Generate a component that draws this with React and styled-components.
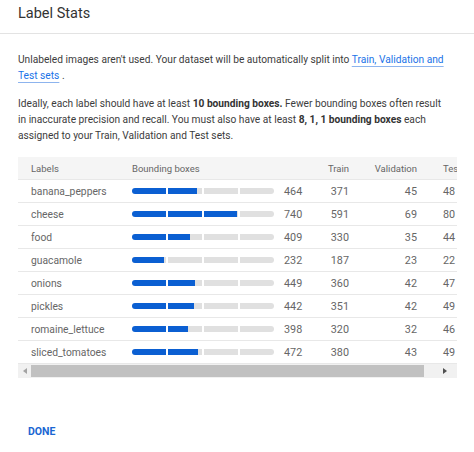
import React from "react";
import styled, { createGlobalStyle } from "styled-components";

const rows = [
  { label: "banana_peppers", total: 464, train: 371, validation: 45, test: 48 },
  { label: "cheese", total: 740, train: 591, validation: 69, test: 80 },
  { label: "food", total: 409, train: 330, validation: 35, test: 44 },
  { label: "guacamole", total: 232, train: 187, validation: 23, test: 22 },
  { label: "onions", total: 449, train: 360, validation: 42, test: 47 },
  { label: "pickles", total: 442, train: 351, validation: 42, test: 49 },
  { label: "romaine_lettuce", total: 398, train: 320, validation: 32, test: 46 },
  { label: "sliced_tomatoes", total: 472, train: 380, validation: 43, test: 49 },
];

const MAX = 1000;
const SEGMENTS = 4;

function Bar({ value }) {
  const per = MAX / SEGMENTS;
  return (
    <BarTrack>
      {Array.from({ length: SEGMENTS }).map((_, i) => {
        const fill = Math.max(0, Math.min(1, (value - per * i) / per));
        return (
          <Segment key={i}>
            <Fill style={{ width: `${fill * 100}%` }} />
          </Segment>
        );
      })}
    </BarTrack>
  );
}

function App() {
  return (
    <>
      <GlobalStyle />
      <Dialog>
        <Header>
          <Title>Label Stats</Title>
        </Header>
        <Body>
          <Paragraph>
            Unlabeled images aren't used. Your dataset will be automatically
            split into <Link href="#">Train, Validation and Test sets</Link> .
          </Paragraph>
          <Paragraph>
            Ideally, each label should have at least <b>10 bounding boxes.</b>{" "}
            Fewer bounding boxes often result in inaccurate precision and
            recall. You must also have at least <b>8, 1, 1 bounding boxes</b>{" "}
            each <NoWrap>assigned to your Train, Validation and Test sets.</NoWrap>
          </Paragraph>
          <TableScroll>
            <Table>
              <HeadRow>
                <Cell>Labels</Cell>
                <Cell>Bounding boxes</Cell>
                <Cell />
                <Cell $right>Train</Cell>
                <Cell $right>Validation</Cell>
                <Cell $pad>Test</Cell>
              </HeadRow>
              {rows.map((r) => (
                <Row key={r.label}>
                  <Cell>{r.label}</Cell>
                  <Cell>
                    <Bar value={r.total} />
                  </Cell>
                  <Cell $num>{r.total}</Cell>
                  <Cell $num $right>{r.train}</Cell>
                  <Cell $num $right>{r.validation}</Cell>
                  <Cell $num $pad>{r.test}</Cell>
                </Row>
              ))}
            </Table>
          </TableScroll>
          <Scrollbar>
            <Arrow>
              <svg width="4" height="6" viewBox="0 0 4 6">
                <path d="M4 0 L0 3 L4 6 Z" fill="#a3a3a3" />
              </svg>
            </Arrow>
            <Thumb />
            <Arrow $end>
              <svg width="4" height="6" viewBox="0 0 4 6">
                <path d="M0 0 L4 3 L0 6 Z" fill="#505050" />
              </svg>
            </Arrow>
          </Scrollbar>
        </Body>
        <Footer>
          <DoneButton>DONE</DoneButton>
        </Footer>
      </Dialog>
    </>
  );
}

const GlobalStyle = createGlobalStyle`
  body {
    margin: 0;
    background: #fff;
    font-family: Roboto, "Liberation Sans", sans-serif;
  }
`;

const Dialog = styled.div`
  width: 474px;
  height: 452px;
  display: flex;
  flex-direction: column;
  background: #fff;
`;

const Header = styled.div`
  padding: 5px 18px 10px;
  border-bottom: 1px solid #e3e3e3;
`;

const Title = styled.h1`
  margin: 0;
  font-size: 14.5px;
  line-height: 18px;
  font-weight: 400;
  color: #333;
`;

const Body = styled.div`
  padding: 18px 17px 0 18px;
`;

const Paragraph = styled.p`
  margin: 0 0 12px;
  max-width: 432px;
  font-size: 10.2px;
  line-height: 16px;
  color: #3c3c3c;

  b {
    font-weight: 700;
    color: #333;
  }
`;

const NoWrap = styled.span`
  white-space: nowrap;
`;

const Link = styled.a`
  color: #1a73e8;
  text-decoration: underline;
  text-decoration-color: #8db4ee;
  text-underline-offset: 3px;
`;

const TableScroll = styled.div`
  margin-top: 13px;
  width: 439px;
  overflow: hidden;
`;

const Table = styled.div`
  width: 520px;
  font-size: 10.3px;
  color: #666;
`;

const cols = "114px 152px 40px 25px 68px 121px";

const HeadRow = styled.div`
  display: grid;
  grid-template-columns: ${cols};
  align-items: center;
  height: 22px;
  background: #f5f5f5;
  border-bottom: 1px solid #e8e8e8;
  font-size: 9.5px;
`;

const Row = styled.div`
  display: grid;
  grid-template-columns: ${cols};
  align-items: center;
  height: 22px;
  border-bottom: 1px solid #e8e8e8;
`;

const Cell = styled.div`
  white-space: nowrap;
  text-align: ${(p) => (p.$right ? "right" : "left")};
  padding-left: ${(p) => (p.$pad ? "26px" : "0")};
  font-size: ${(p) => (p.$num ? "10.8px" : "inherit")};

  &:first-child {
    padding-left: 13px;
  }
`;

const BarTrack = styled.div`
  display: flex;
  gap: 1.5px;
  width: 142px;
  height: 6px;
`;

const Segment = styled.div`
  flex: 1;
  background: #e0e0e0;
  overflow: hidden;

  &:first-child {
    border-radius: 3px 0 0 3px;
  }
  &:last-child {
    border-radius: 0 3px 3px 0;
  }
`;

const Fill = styled.div`
  height: 100%;
  background: #0b5fd2;
`;

const Scrollbar = styled.div`
  display: flex;
  align-items: center;
  width: 439px;
  height: 14px;
  background: #f1f1f1;
`;

const Arrow = styled.div`
  display: flex;
  align-items: center;
  justify-content: center;
  width: 13px;
  height: 14px;
  margin-left: ${(p) => (p.$end ? "auto" : "0")};
  margin-right: ${(p) => (p.$end ? "6px" : "0")};
`;

const Thumb = styled.div`
  width: 393px;
  height: 12px;
  background: #c1c1c1;
`;

const Footer = styled.div`
  margin-top: auto;
  padding: 0 0 12px 18px;
`;

const DoneButton = styled.button`
  border: none;
  background: none;
  padding: 0 10px;
  height: 18px;
  font-family: Roboto, "Liberation Sans", sans-serif;
  font-size: 10.5px;
  font-weight: 700;
  color: #1a66d2;
  cursor: pointer;
`;

export default App;
